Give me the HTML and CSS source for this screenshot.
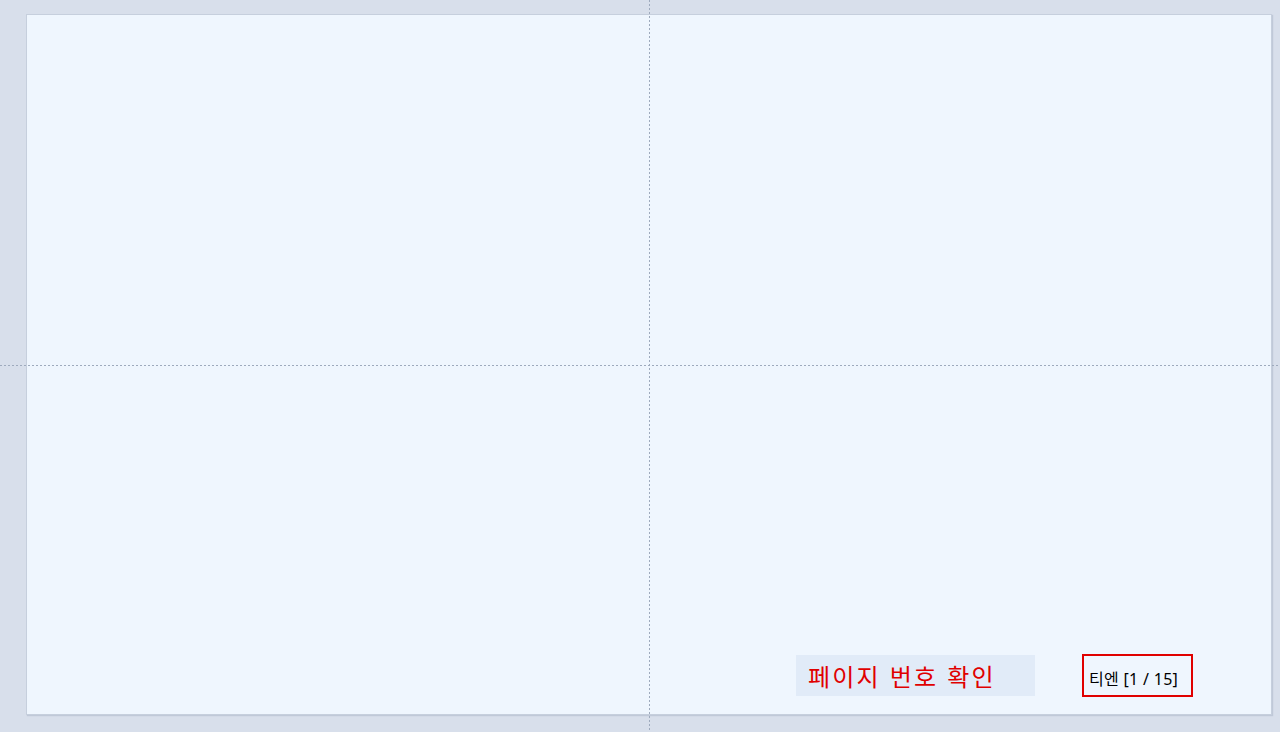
FILE: index.html
```html
<!DOCTYPE html>
<html lang="ko">
<head>
<meta charset="utf-8">
<title>페이지 번호 확인</title>
<link rel="stylesheet" href="styles.css">
</head>
<body>
<div class="stage">
  <div class="slide">
    <div class="title-box">페이지 번호 확인</div>
    <div class="page-box">티엔 [1 / 15]</div>
  </div>
  <div class="guide guide-v"></div>
  <div class="guide guide-h"></div>
</div>
</body>
</html>
```
FILE: styles.css
```css
html, body {
  margin: 0;
  padding: 0;
}
body {
  background: #d8dfeb;
  font-family: "Noto Sans CJK KR", "Noto Sans", sans-serif;
  overflow: hidden;
}
.stage {
  position: relative;
  width: 1280px;
  height: 732px;
  padding: 14px 0 0 26px;
  box-sizing: border-box;
}
.slide {
  position: relative;
  width: 1246px;
  height: 701px;
  box-sizing: border-box;
  background: #eff6fe;
  border: 1px solid #c6cfdd;
  box-shadow: 1px 1px 1px rgba(150, 160, 180, 0.35);
}
.title-box {
  position: absolute;
  left: 769px;
  top: 640px;
  width: 239px;
  height: 41px;
  box-sizing: border-box;
  padding-left: 12px;
  background: #e1ebf8;
  color: #e00000;
  font-size: 24px;
  line-height: 41px;
  letter-spacing: 2.2px;
  white-space: nowrap;
}
.page-box {
  position: absolute;
  left: 1055px;
  top: 639px;
  width: 111px;
  height: 43px;
  box-sizing: border-box;
  border: 2px solid #e00000;
  padding: 12px 0 0 5px;
  color: #000;
  font-family: "Noto Sans", "Noto Sans CJK KR", sans-serif;
  font-size: 16px;
  line-height: 22px;
  letter-spacing: 0.3px;
  white-space: nowrap;
}
.guide {
  position: absolute;
  pointer-events: none;
}
.guide-v {
  left: 649px;
  top: 0;
  width: 1px;
  height: 732px;
  background: repeating-linear-gradient(to bottom, #9eaabd 0 2px, transparent 2px 4px);
}
.guide-h {
  left: 0;
  top: 365px;
  width: 1280px;
  height: 1px;
  background: repeating-linear-gradient(to right, #9eaabd 0 2px, transparent 2px 4px);
}
```
